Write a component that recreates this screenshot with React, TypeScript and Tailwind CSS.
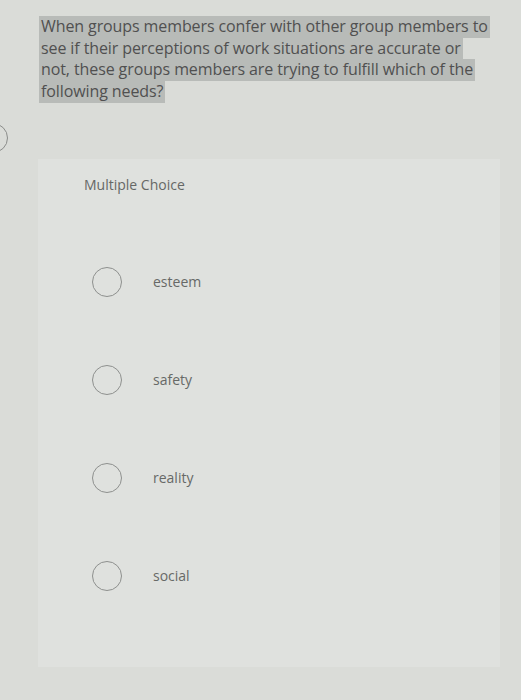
import React from "react";

const options = ["esteem", "safety", "reality", "social"];
const lines = [
  "When groups members confer with other group members to",
  "see if their perceptions of work situations are accurate or",
  "not, these groups members are trying to fulfill which of the",
  "following needs?",
];

export default function App() {
  return (
    <div className="w-[521px] h-[700px] overflow-hidden bg-[#dadcd8] relative" style={{ fontFamily: "'Open Sans', 'Noto Sans', sans-serif" }}>
      <div className="pl-[39px] pt-[16px] flex flex-col items-start text-[16px] leading-[21.7px] tracking-[-0.1px] text-[#505050]">
        {lines.map((l) => (
          <span key={l} className="bg-[#b8bbb8] px-[2px] whitespace-nowrap">{l}</span>
        ))}
      </div>
      <div className="absolute left-[-22px] top-[123px] w-[30px] h-[30px] rounded-full border border-[#8a8c8a]" />
      <div className="mt-[56px] ml-[38px] w-[462px] h-[508px] bg-[#dfe1de]">
        <div className="pl-[46px] pt-[15px] text-[14px] text-[#666866]">Multiple Choice</div>
        <div className="flex flex-col gap-[68px] pt-[72px]">
          {options.map((o) => (
            <div key={o} className="flex items-center h-[30px]">
              <div className="ml-[54px] w-[30px] h-[30px] rounded-full border-[1.5px] border-[#8e908e]" />
              <div className="ml-[31px] text-[14px] text-[#676967]">{o}</div>
            </div>
          ))}
        </div>
      </div>
    </div>
  );
}
